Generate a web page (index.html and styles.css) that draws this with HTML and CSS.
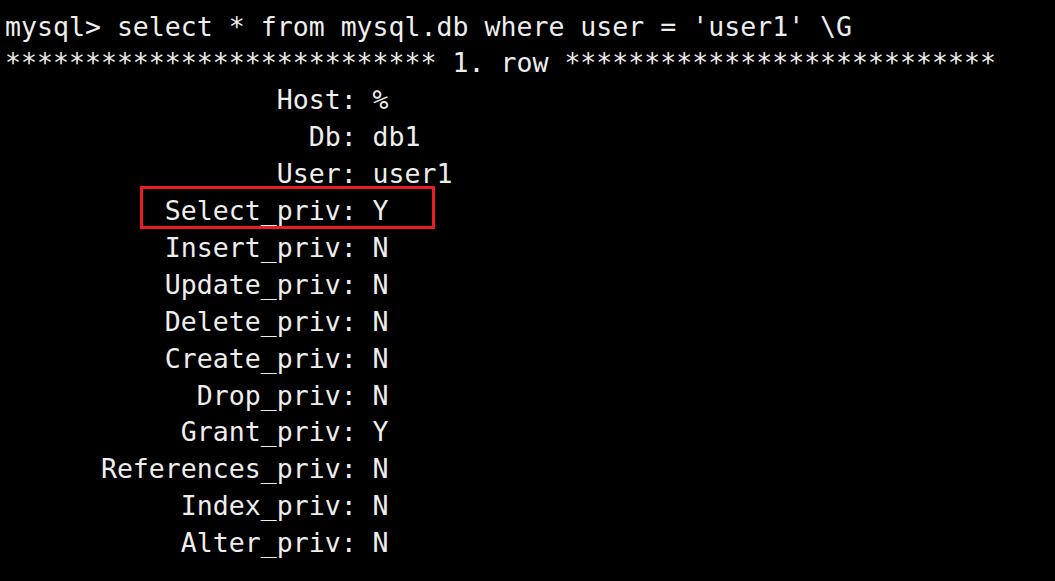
FILE: index.html
```html
<!DOCTYPE html>
<html>
<head>
<meta charset="utf-8">
<link rel="stylesheet" href="styles.css">
</head>
<body>
<div class="terminal">
<div class="line">mysql&gt; select * from mysql.db where user = 'user1' \G</div>
<div class="line">*************************** 1. row ***************************</div>
<div class="line">                 Host: %</div>
<div class="line">                   Db: db1</div>
<div class="line">                 User: user1</div>
<div class="line hl"><span class="mark"></span>          Select_priv: Y</div>
<div class="line">          Insert_priv: N</div>
<div class="line">          Update_priv: N</div>
<div class="line">          Delete_priv: N</div>
<div class="line">          Create_priv: N</div>
<div class="line">            Drop_priv: N</div>
<div class="line">           Grant_priv: Y</div>
<div class="line">      References_priv: N</div>
<div class="line">           Index_priv: N</div>
<div class="line">           Alter_priv: N</div>
</div>
</body>
</html>
```
FILE: styles.css
```css
html, body {
  margin: 0;
  padding: 0;
  background: #000;
}
body {
  width: 1055px;
  height: 581px;
  overflow: hidden;
}
.terminal {
  padding: 8.5px 0 0 5px;
  font-family: "DejaVu Sans Mono", monospace;
  font-size: 26.55px;
  line-height: 36.9px;
  color: #eeeeee;
}
.line {
  white-space: pre;
}
.hl {
  position: relative;
}
.mark {
  position: absolute;
  left: 135px;
  top: -7px;
  width: 289px;
  height: 37px;
  border: 3px solid #ed1c24;
}
```
